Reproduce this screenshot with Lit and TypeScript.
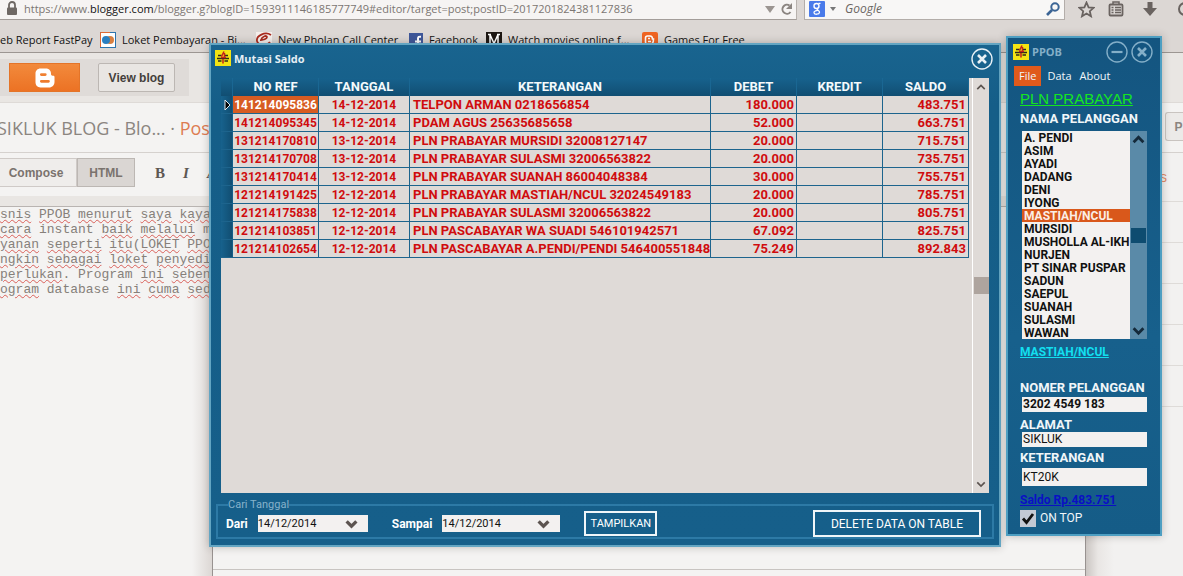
import { LitElement, html, css, svg } from "lit";
import { customElement } from "lit/decorators.js";

interface Row { ref: string; date: string; note: string; debit: string; credit: string; balance: string; }

const ROWS: Row[] = [
  { ref: "141214095836", date: "14-12-2014", note: "TELPON ARMAN 0218656854", debit: "180.000", credit: "", balance: "483.751" },
  { ref: "141214095345", date: "14-12-2014", note: "PDAM AGUS 25635685658", debit: "52.000", credit: "", balance: "663.751" },
  { ref: "131214170810", date: "13-12-2014", note: "PLN PRABAYAR MURSIDI 32008127147", debit: "20.000", credit: "", balance: "715.751" },
  { ref: "131214170708", date: "13-12-2014", note: "PLN PRABAYAR SULASMI 32006563822", debit: "20.000", credit: "", balance: "735.751" },
  { ref: "131214170414", date: "13-12-2014", note: "PLN PRABAYAR SUANAH 86004048384", debit: "30.000", credit: "", balance: "755.751" },
  { ref: "121214191425", date: "12-12-2014", note: "PLN PRABAYAR MASTIAH/NCUL 32024549183", debit: "20.000", credit: "", balance: "785.751" },
  { ref: "121214175838", date: "12-12-2014", note: "PLN PRABAYAR SULASMI 32006563822", debit: "20.000", credit: "", balance: "805.751" },
  { ref: "121214103851", date: "12-12-2014", note: "PLN PASCABAYAR WA SUADI 546101942571", debit: "67.092", credit: "", balance: "825.751" },
  { ref: "121214102654", date: "12-12-2014", note: "PLN PASCABAYAR A.PENDI/PENDI 546400551848", debit: "75.249", credit: "", balance: "892.843" },
];

const CUSTOMERS = ["A. PENDI", "ASIM", "AYADI", "DADANG", "DENI", "IYONG", "MASTIAH/NCUL", "MURSIDI",
  "MUSHOLLA AL-IKH", "NURJEN", "PT SINAR PUSPAR", "SADUN", "SAEPUL", "SUANAH", "SULASMI", "WAWAN"];

const appIcon = html`<svg width="16" height="16" viewBox="0 0 16 16" aria-hidden="true">
  <rect width="16" height="16" fill="#f3e413"></rect>
  <path d="M3 5.500h3.500M10 5.500h3M2 8.500h12M3 11h3.500M9.500 11H13" stroke="#2e2a1c" stroke-width="1.300"></path>
  <path d="M9 1.500 6.500 6.500M6 7.500h5M9.500 3v5M8 9v4.500" fill="none" stroke="#c4201c" stroke-width="1.500"></path>
</svg>`;

const closeIcon = html`<svg width="22" height="22" viewBox="0 0 22 22" fill="none" stroke="currentColor" aria-hidden="true">
  <circle cx="11" cy="11" r="10" stroke-width="1.400"></circle>
  <path d="m7 7 8 8M15 7l-8 8" stroke-width="2.600"></path></svg>`;

const minIcon = html`<svg width="22" height="22" viewBox="0 0 22 22" fill="none" stroke="currentColor" aria-hidden="true">
  <circle cx="11" cy="11" r="10" stroke-width="1.400"></circle>
  <path d="M5.500 11h11" stroke-width="2.200"></path></svg>`;

const chevron = (size: number, up: boolean, width = 2) => html`<svg width=${size} height=${size} viewBox="0 0 12 12"
  fill="none" stroke="currentColor" stroke-width=${width} aria-hidden="true">${up ? svg`<path d="M1.500 8.500 6 4l4.500 4.500"></path>` : svg`<path d="M1.500 4 6 8.500 10.500 4"></path>`}</svg>`;

const bloggerGlyph = html`<svg width="20" height="20" viewBox="0 0 20 20" aria-hidden="true">
  <path fill="#fff" fill-rule="evenodd" d="M5.500 0.500h5.500c3 0 5 2.300 5 5v.8c.1.900.6 1.400 1.500 1.400h.7c.8 0 1.300.5 1.300 1.300v5c0 3-2.300 5.500-5.500 5.500H5.500C2.500 19.500.5 17.200.5 14.300V5.700C.5 2.700 2.500.5 5.500.5zM6.300 5.200a1.300 1.300 0 0 0 0 2.700h4a1.300 1.300 0 0 0 0-2.700zM6.300 12a1.300 1.300 0 0 0 0 2.700h7.200a1.300 1.300 0 0 0 0-2.700z"></path></svg>`;

@customElement("browser-chrome")
class BrowserChrome extends LitElement {
  static styles = css`
    :host { display: block; background: #dcd7d4; border-bottom: 1px solid #9c9692; font-family: "Open Sans", sans-serif; font-size: 11px; line-height: 16px; color: #111; }
    svg { display: block; flex: none; }
    .nav { display: flex; height: 20px; align-items: stretch; }
    .address { flex: 1; min-width: 0; display: flex; align-items: center; gap: 5px; background: #f6f4f3; border-bottom: 1px solid #a39d99; border-right: 1px solid #b8b2ae; padding: 0 0 2px 5px; }
    .url { flex: 1; min-width: 0; color: #7c7672; white-space: nowrap; overflow: hidden; }
    .url b { color: #111; font-weight: 500; }
    .search { flex: 0 0 251px; margin-left: 7px; display: flex; align-items: center; gap: 5px; background: #f8f7f6; border: solid #b3ada9; border-width: 0 1px 1px; padding: 0 4px 2px; }
    .search input { flex: 1; min-width: 0; border: 0; padding: 0 0 0 4px; background: none; font: italic 12px/16px "Open Sans", sans-serif; }
    .search input::placeholder { color: #6b6662; opacity: 1; }
    .tools { flex: 0 0 118px; display: flex; align-items: center; gap: 13px; padding: 0 0 2px 13px; overflow: hidden; color: #6a6360; box-sizing: border-box; }
    .bookmarks { display: flex; height: 32px; align-items: center; padding-top: 8px; box-sizing: border-box; white-space: nowrap; overflow: hidden; }
    .bookmarks a { display: flex; align-items: center; gap: 6px; color: inherit; text-decoration: none; flex: none; }
    .w1 { width: 100px; } .w2 { width: 156px; } .w3 { width: 153px; } .w4 { width: 77px; } .w5 { width: 156px; }
    .w6 { width: 120px; }
  `;
  render() {
    return html`
      <div class="nav">
        <div class="address">
          <svg width="14" height="15" viewBox="0 0 14 15"><path d="M4 7V4a3 3 0 0 1 6 0v3" fill="none" stroke="#6e6864" stroke-width="1.800"></path><rect x="2" y="6.500" width="10" height="7.500" rx="1" fill="#6e6864"></rect></svg>
          <span class="url">https://www.<b>blogger.com</b>/blogger.g?blogID=1593911146185777749#editor/target=post;postID=2017201824381127836</span>
          <svg width="10" height="8" viewBox="0 0 10 8"><path d="M0 1h10L5 8z" fill="#9b9591"></path></svg>
          <svg width="16" height="14" viewBox="0 0 16 14"><path d="M9.500 3.500A4.500 4.500 0 1 0 10.500 10" fill="none" stroke="#8b8581" stroke-width="2"></path><path d="M12 1v6H6z" fill="#8b8581"></path></svg>
        </div>
        <div class="search">
          <svg width="16" height="16" viewBox="0 0 16 16"><rect width="16" height="16" rx="1" fill="#4a7bea"></rect><circle cx="7.500" cy="5" r="2.500" fill="none" stroke="#fff" stroke-width="1.400"></circle><path d="M9.500 2.300h2M8 7.500c-1 1 2.800 1.800 2.500 4s-5 2.300-5.500.3 3-2.600 4.500-2.300" fill="none" stroke="#fff" stroke-width="1.300"></path></svg>
          <svg width="6" height="4" viewBox="0 0 6 4"><path d="M0 0h6L3 4z" fill="#777"></path></svg>
          <input type="text" placeholder="Google" aria-label="Search" />
          <svg width="14" height="14" viewBox="0 0 14 14" fill="none" stroke="#3c6595"><circle cx="9" cy="5" r="3.700" stroke-width="2"></circle><path d="M6 8l-5 5" stroke-width="2.600"></path></svg>
        </div>
        <div class="tools">
          <svg width="17" height="17" viewBox="0 0 17 17"><path d="m8.500 1.500 2.100 4.800 5 .5-3.800 3.400 1.200 5.100-4.500-2.700L4 15.300l1.200-5.100L1.400 6.800l5-.5z" fill="none" stroke="currentColor" stroke-width="1.800"></path></svg>
          <svg width="16" height="16" viewBox="0 0 16 16"><rect x="1.500" y="3.500" width="13" height="11" rx="1" fill="none" stroke="currentColor" stroke-width="1.800"></rect><path d="M5 3V1h6v2M3.500 6.500h2M3.500 9h2M3.500 11.500h2M7 6.500h6M7 9h6M7 11.500h6" fill="none" stroke="currentColor" stroke-width="1.500"></path></svg>
          <svg width="26" height="16" viewBox="0 0 26 16"><path d="M10.500 1h5v6H20l-7 8-7-8h4.500z" fill="currentColor"></path></svg>
          <svg width="16" height="16" viewBox="0 0 16 16"><circle cx="9" cy="8" r="6" fill="none" stroke="currentColor" stroke-width="2"></circle></svg>
        </div>
      </div>
      <nav class="bookmarks">
        <a class="w1" href="#">eb Report FastPay</a>
        <a class="w2" href="#"><svg width="16" height="16" viewBox="0 0 16 16"><rect x=".5" y=".5" width="15" height="15" fill="#fff" stroke="#2e75ad"></rect><path d="M.5 15V.5H10" fill="none" stroke="#e26a33"></path><circle cx="10" cy="8" r="4" fill="#d9803f"></circle><circle cx="6" cy="8" r="4" fill="#2b7fc0"></circle></svg>Loket Pembayaran - Bi...</a>
        <a class="w3" href="#"><svg width="16" height="16" viewBox="0 0 16 16"><rect width="16" height="16" fill="#f4eeeb"></rect><path d="M15 3C9-1 0 4 1 9s10 5 13 1M5 8c1-4 6-5 6-3S7 8 5 8z" fill="none" stroke="#a82a1e" stroke-width="1.800"></path></svg>New Pholan Call Center</a>
        <a class="w4" href="#"><svg width="14" height="14" viewBox="0 0 14 14"><rect width="14" height="14" fill="#3e5799"></rect><path d="M9 14V8.500h3M6 8.500h3M9 9V5.500C9 4 10 3.500 12 3.700" fill="none" stroke="#fff" stroke-width="2"></path></svg>Facebook</a>
        <a class="w5" href="#"><svg width="16" height="16" viewBox="0 0 16 16"><rect width="16" height="16" fill="#1d1713"></rect><path d="M4 14V2.500l4 9 4-9V14M2 2.500h3M11 2.500h3" fill="none" stroke="#fff" stroke-width="1.500"></path></svg>Watch movies online f...</a>
        <a class="w6" href="#"><svg width="16" height="16" viewBox="0 0 16 16"><rect width="16" height="16" rx="2" fill="#ef6422"></rect><path d="M5.500 4H8c2 0 2.500 1.500 2.500 3h1c0 3-.5 5-3 5h-3C4 12 3.500 11 3.500 10V6c0-1 .5-2 2-2zM6 6.500h2M6 9.500h3" fill="none" stroke="#fff" stroke-width="1.600"></path></svg>Games For Free</a>
      </nav>`;
  }
}

@customElement("blog-editor")
class BlogEditor extends LitElement {
  static styles = css`
    :host { display: flex; flex-direction: column; background: #f4f3f2; font-family: "Liberation Sans", Arial, sans-serif; color: #6a6460; }
    button { font: bold 12px/16px "Liberation Sans", Arial, sans-serif; box-sizing: border-box; padding: 0; margin: 0; }
    .brand { height: 50px; background: #e9e6e3; border-bottom: 1px solid #dedad7; display: flex; box-sizing: border-box; padding-top: 6px; }
    .brandbox { background: #dfdbd8; width: 189px; height: 37px; display: flex; align-items: center; gap: 18px; padding-left: 9px; box-sizing: border-box; }
    .logo { box-sizing: border-box; width: 71px; height: 29px; background: linear-gradient(#f28a3c, #ec7224); border: 1px solid #e47428; display: grid; place-items: center; }
    .view { width: 77px; height: 29px; background: #e9e6e3; border: 1px solid #bcb7b3; border-radius: 2px; color: #443f3c; }
    .title { height: 50px; box-sizing: border-box; border-bottom: 1px solid #d5d1ce; display: flex; align-items: center; justify-content: space-between; }
    h1 { margin: 0 0 0 -3px; font: 400 18px/24px "Open Sans", sans-serif; color: #8b8580; white-space: nowrap; }
    h1 span { color: #dd7c52; }
    .publish { width: 18px; height: 29px; margin-bottom: 2px; border: 1px solid #c9c4c0; border-radius: 3px 0 0 3px; border-right: 0; background: #eceae8; color: #8b8580; flex: none; padding-left: 8px; }
    .below { display: grid; grid-template-columns: minmax(0, 1fr) 98px; flex: 1; }
    .left { display: flex; flex-direction: column; }
    .toolbar { height: 43px; display: flex; align-items: center; padding-bottom: 4px; box-sizing: border-box; }
    .seg { height: 29px; border: 1px solid #cfcac7; background: #efedeb; color: #7a736e; }
    .compose { width: 77px; border-left: 0; padding-right: 4px; }
    .html { width: 58px; background: #dad6d3; border-color: #bcb7b3; }
    .fmt { border: 0; background: none; color: #5d5753; font: bold 15px/20px "Liberation Serif", serif; width: 26px; text-align: center; }
    .first { margin-left: 12px; }
    .i { font-style: italic; }
    .band { height: 10px; background: #e9e6e3; border-bottom: 1px solid #b9b4b1; }
    .draft { margin: 0; font: 13px/15px "Liberation Mono", "Courier New", monospace; color: #86807a; white-space: pre; width: 213px; box-sizing: border-box; background: linear-gradient(90deg, #f4f3f2 192px, #dcd7d4); border-right: 1px solid #989290; flex: none; }
    .draft u { text-decoration: underline wavy #d9605a 1px; text-underline-offset: 1px; }
    .row { display: flex; flex: 1; }
    .page { flex: 1; display: flex; flex-direction: column; justify-content: flex-end; background: #f4f3f2; }
    .rule { border-bottom: 1px solid #c8c4c1; margin-bottom: 6px; }
    aside { background: linear-gradient(90deg, #cbc6c3, #e9e6e4 12px, #f2f1f0 28px); text-align: right; font-size: 14px; border-left: 1px solid #989290; }
    .opt { height: 41px; box-sizing: border-box; border-bottom: 1px solid #dedbd8; display: flex; align-items: center; justify-content: flex-end; padding-right: 16px; color: #e08a66; }
    .opt.short { height: 49px; }
  `;
  render() {
    return html`
      <div class="brand"><div class="brandbox"><a class="logo" href="#" aria-label="Blogger">${bloggerGlyph}</a><button class="view">View blog</button></div></div>
      <div class="title"><h1>SIKLUK BLOG - Blo... · <span>Pos</span></h1><button class="publish">P</button></div>
      <div class="below">
        <div class="left">
          <div class="toolbar">
            <button class="seg compose">Compose</button><button class="seg html">HTML</button>
            <button class="fmt first">B</button><button class="fmt i">I</button><button class="fmt i">A</button>
          </div>
          <div class="band"></div>
          <div class="row">
            <p class="draft"><u>snis</u> <u>PPOB</u> <u>menurut</u> <u>saya</u> <u>kaya</u>
<u>cara</u> instant <u>baik</u> <u>melalui</u> m
<u>yanan</u> <u>seperti</u> <u>itu</u>(<u>LOKET</u> <u>PPO</u>
<u>ngkin</u> <u>sebagai</u> <u>loket</u> <u>penyedi</u>
<u>perlukan</u>. Program <u>ini</u> <u>seben</u>
<u>ogram</u> database <u>ini</u> <u>cuma</u> <u>sed</u></p>
            <div class="page"><div class="rule"></div></div>
          </div>
        </div>
        <aside><div class="opt short">s</div>${[1, 2, 3, 4, 5].map(() => html`<div class="opt"></div>`)}</aside>
      </div>`;
  }
}

@customElement("balance-window")
class BalanceWindow extends LitElement {
  static styles = css`
    :host { display: flex; flex-direction: column; box-sizing: border-box; border: 2px solid #63a5c2; background: linear-gradient(#19648f, #155e88 60px, #165f8a); box-shadow: 0 0 8px rgba(60, 50, 45, .3); font-family: Roboto, sans-serif; color: #fff; }
    svg { display: block; flex: none; }
    button { padding: 0; margin: 0; font: inherit; color: inherit; background: none; border: 0; box-sizing: border-box; }
    .head { display: flex; align-items: flex-start; height: 33px; padding: 5px 6px 0 4px; box-sizing: border-box; }
    h2 { flex: 1; margin: 0; padding-left: 3px; font: bold 11px/18px "Open Sans", sans-serif; color: #e6eff5; }
    .x { margin-top: -2px; color: #e8f1f6; }
    .grid { display: flex; height: 415px; margin: 0 10px; background: #dfdad7; box-sizing: border-box; }
    .gridbody { flex: 1; min-width: 0; padding-right: 3px; }
    table { width: 100%; border-collapse: separate; border-spacing: 0; table-layout: fixed; font: bold 13px/17px Roboto, sans-serif; }
    th { height: 18px; padding: 0; line-height: 18px; color: #f4fafc; background: linear-gradient(#17628d, #114e72); border-right: 1px solid #1a6793; }
    td { height: 17px; padding: 0 2px; color: #d00c0e; white-space: nowrap; overflow: hidden; border-right: 1px solid #1d648d; border-bottom: 1px solid #1d648d; background: #dfdad7; }
    .mark { padding: 0; background: linear-gradient(90deg, #17628d, #114e72); border-right-color: #155e88; }
    .mark svg { margin: 0 1px 0 auto; }
    .ref, .date { padding: 1px 0 0; line-height: 16px; height: 16px; text-align: center; font-size: 12px; }
    .note { padding-left: 3px; }
    .num { text-align: right; }
    .sel { color: #fff; background: #d75c22; }
    .c0 { width: 12px; } .c1 { width: 86px; } .c2 { width: 91px; } .c4, .c5, .c6 { width: 86px; }
    .bar { flex: 0 0 16px; border-left: 1px solid #fff; display: flex; flex-direction: column; justify-content: space-between; align-items: center; color: #5c5450; background: #dfdad7; }
    .bar button { height: 18px; display: grid; place-items: center; }
    .thumb { width: 15px; height: 17px; background: #aea49e; }
    fieldset { margin: 6px 5px 0; padding: 0 11px 0 8px; border: 2px solid #2d7aa6; min-width: 0; height: 40px; box-sizing: border-box; }
    legend { margin: 0 0 0 2px; padding: 0; font-size: 11px; line-height: 12px; color: #86b2cb; }
    .fields { display: flex; align-items: center; margin-top: -1px; }
    label { font: bold 12px/16px Roboto, sans-serif; }
    .pick { position: relative; display: flex; margin: 0 24px 0 10px; color: #5c5450; }
    select { appearance: none; border: 0; border-radius: 0; margin: 0; padding: 0; height: 17px; width: 110px; background: #f3f1f0; color: #111; font: 11px/17px Roboto, sans-serif; }
    .wide select { width: 118px; }
    .pick svg { position: absolute; right: 10px; top: 2px; pointer-events: none; }
    .show { border: 2px solid #f0f6f9; width: 73px; height: 25px; font-size: 11px; }
    .del { border: 2px solid #f0f6f9; width: 168px; height: 27px; font-size: 12px; margin-left: auto; }
  `;
  render() {
    return html`
      <div class="head">${appIcon}<h2>Mutasi Saldo</h2><button class="x" aria-label="Close">${closeIcon}</button></div>
      <div class="grid">
        <div class="gridbody">
          <table>
            <colgroup><col class="c0" /><col class="c1" /><col class="c2" /><col /><col class="c4" /><col class="c5" /><col class="c6" /></colgroup>
            <thead><tr><th></th><th>NO REF</th><th>TANGGAL</th><th>KETERANGAN</th><th>DEBET</th><th>KREDIT</th><th>SALDO</th></tr></thead>
            <tbody>${ROWS.map((r, i) => html`<tr>
              <td class="mark">${i === 0 ? html`<svg width="7" height="12" viewBox="0 0 7 12"><path d="M1 1v10l5-5z" fill="#000" stroke="#dfe8ee" stroke-width="1"></path></svg>` : ""}</td>
              <td class="ref ${i === 0 ? "sel" : ""}">${r.ref}</td><td class="date">${r.date}</td><td class="note">${r.note}</td>
              <td class="num">${r.debit}</td><td class="num">${r.credit}</td><td class="num">${r.balance}</td></tr>`)}</tbody>
          </table>
        </div>
        <div class="bar"><button aria-label="Scroll up">${chevron(10, true)}</button><div class="thumb"></div><button aria-label="Scroll down">${chevron(10, false)}</button></div>
      </div>
      <fieldset>
        <legend>Cari Tanggal</legend>
        <div class="fields">
          <label for="from">Dari</label>
          <div class="pick"><select id="from"><option>14/12/2014</option></select>${chevron(13, false, 3)}</div>
          <label for="to">Sampai</label>
          <div class="pick wide"><select id="to"><option>14/12/2014</option></select>${chevron(13, false, 3)}</div>
          <button class="show">TAMPILKAN</button>
          <button class="del">DELETE DATA ON TABLE</button>
        </div>
      </fieldset>`;
  }
}

@customElement("customer-window")
class CustomerWindow extends LitElement {
  static styles = css`
    :host { display: block; box-sizing: border-box; border: 2px solid #4e9fc2; background: linear-gradient(#145580, #17608c 300px, #155c87); box-shadow: 0 0 8px rgba(60, 50, 45, .3); font-family: Roboto, sans-serif; color: #f0f6f9; padding: 2px 7px 6px 5px; }
    svg { display: block; flex: none; }
    button { padding: 0; margin: 0; font: inherit; color: inherit; background: none; border: 0; box-sizing: border-box; }
    .head { display: flex; align-items: center; gap: 3px; height: 24px; color: #84afc8; }
    h2 { flex: 1; margin: 0; font: bold 11px/16px "Open Sans", sans-serif; }
    .menu { display: flex; gap: 4px; margin: 2px 0 0 1px; font: 11px/20px "Open Sans", sans-serif; }
    .menu button { height: 20px; padding: 0 2px; }
    .menu .on { background: #e05a1c; padding: 0 5px; }
    .body { padding: 3px 6px 0 7px; display: flex; flex-direction: column; align-items: stretch; }
    .body > a { align-self: flex-start; }
    .prod { font: 15px/20px "Liberation Sans", Arial, sans-serif; color: #14e61e; }
    label { font: bold 13px/15px Roboto, sans-serif; white-space: nowrap; }
    .name { margin: 2px 0 5px; }
    .list { display: flex; height: 208px; margin-left: 2px; }
    select { flex: 1; min-width: 0; appearance: none; border: 0; border-radius: 0; padding: 0; margin: 0; outline: 0; overflow: hidden; background: #f3f1f0; color: #111; font: bold 12px/13px Roboto, sans-serif; height: 208px; scrollbar-width: none; }
    option { padding: 0 2px; min-height: 13px; height: 13px; font: bold 12px/13px Roboto, sans-serif; }
    option:checked { background: linear-gradient(#d9581b, #d9581b); -webkit-text-fill-color: #fbeee6; }
    .bar { flex: 0 0 17px; background: #5a8aa8; color: #14293a; display: flex; flex-direction: column; align-items: center; justify-content: space-between; }
    .bar button { height: 17px; display: grid; place-items: center; }
    .thumb { width: 15px; height: 15px; background: #0e4c70; margin: 80px 0 79px; }
    .who { font: bold 12px/16px Roboto, sans-serif; color: #12dff0; margin: 5px 0 20px; }
    input[type="text"] { display: block; margin: 0 0 3px 2px; min-width: 0; height: 15px; box-sizing: border-box; border: 0; padding: 0 1px; background: #f3f1f0; color: #111; font: 12px/15px Roboto, sans-serif; }
    .body input.b { font-weight: bold; margin: 2px 0 5px 2px; }
    .body input.tall { height: 18px; margin: 3px 0 6px 2px; }
    .saldo { font: bold 12px/16px Roboto, sans-serif; color: #0a10c4; }
    .top { display: flex; align-items: center; gap: 4px; margin-top: 2px; font: 12px/17px Roboto, sans-serif; }
    .tick { position: relative; width: 16px; height: 17px; }
    .tick input { appearance: none; display: block; margin: 0; width: 16px; height: 17px; background: #c3c9d4; }
    .tick svg { position: absolute; inset: 0; pointer-events: none; }
  `;
  render() {
    return html`
      <div class="head">${appIcon}<h2>PPOB</h2><button aria-label="Minimize">${minIcon}</button><button aria-label="Close">${closeIcon}</button></div>
      <nav class="menu"><button class="on">File</button><button>Data</button><button>About</button></nav>
      <div class="body">
        <a class="prod" href="#">PLN PRABAYAR</a>
        <label class="name" for="names">NAMA PELANGGAN</label>
        <div class="list">
          <select id="names" size="16">${CUSTOMERS.map(c => html`<option ?selected=${c === "MASTIAH/NCUL"}>${c}</option>`)}</select>
          <div class="bar"><button aria-label="Scroll up">${chevron(13, true, 2.6)}</button><div class="thumb"></div><button aria-label="Scroll down">${chevron(13, false, 2.6)}</button></div>
        </div>
        <a class="who" href="#">MASTIAH/NCUL</a>
        <label for="no">NOMER PELANGGAN</label><input class="b" id="no" type="text" value="3202 4549 183" />
        <label for="addr">ALAMAT</label><input id="addr" type="text" value="SIKLUK" />
        <label for="note">KETERANGAN</label><input class="tall" id="note" type="text" value="KT20K" />
        <a class="saldo" href="#">Saldo Rp.483.751</a>
        <label class="top"><span class="tick"><input type="checkbox" checked /><svg width="16" height="17" viewBox="0 0 16 17"><path d="m3 8.500 3.500 4L13 4" fill="none" stroke="#111" stroke-width="2.800"></path></svg></span>ON TOP</label>
      </div>`;
  }
}

@customElement("app-root")
class AppRoot extends LitElement {
  static styles = css`
    :host { display: flex; flex-direction: column; position: relative; min-height: 100vh; overflow: hidden; background: #f4f3f2; }
    blog-editor { flex: 1; }
    .balance { position: absolute; left: 209px; top: 43px; width: 792px; height: 504px; }
    .customer { position: absolute; left: 1006px; top: 36px; width: 156px; height: 500px; }
  `;
  render() {
    return html`<browser-chrome></browser-chrome><blog-editor></blog-editor>
      <balance-window class="balance"></balance-window><customer-window class="customer"></customer-window>`;
  }
}
